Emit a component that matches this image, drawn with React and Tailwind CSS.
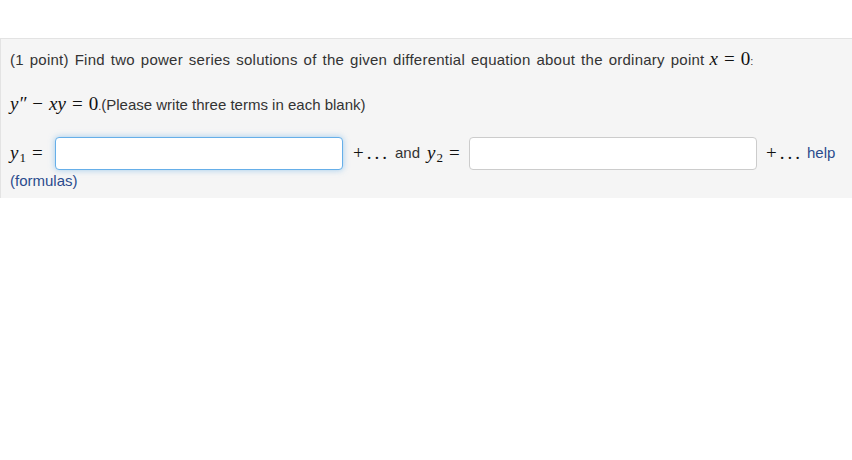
const M = ({ children, className = "" }) => (
  <span
    className={`inline-flex items-baseline font-['Liberation_Serif','DejaVu_Serif',serif] text-[19px] text-[#111] ${className}`}
  >
    {children}
  </span>
);

const V = ({ children }) => <span className="italic">{children}</span>;
const Op = ({ children }) => <span className="mx-[6px]">{children}</span>;
const Sub = ({ children }) => (
  <span className="relative top-[3px] ml-[1px] text-[13px]">{children}</span>
);
const Dots = () => (
  <span className="inline-flex items-baseline">
    <span>+</span>
    <span className="ml-[3px] tracking-[3px]">...</span>
  </span>
);

const App = () => {
  return (
    <div className="min-h-[460px] w-[852px] bg-white pt-[38px] font-['Liberation_Sans',Arial,sans-serif] text-[15px] text-[#333]">
      <div className="h-[160px] border-l border-t border-[#e3e3e3] bg-[#f5f5f5] pl-[9px]">
        <div className="mt-[6px] flex h-[20px] items-baseline">
          <span className="tracking-[0.25px] [word-spacing:1.5px]">
            (1 point) Find two power series solutions of the given differential
            equation about the ordinary point
          </span>
          <M className="ml-[5px]">
            <V>x</V>
            <Op>=</Op>0
          </M>
          <span className="text-[11px]">:</span>
        </div>

        <div className="mt-[25px] flex h-[20px] items-baseline">
          <M>
            <V>y″</V>
            <Op>−</Op>
            <V>xy</V>
            <Op>=</Op>0
          </M>
          <span className="text-[11px]">.</span>
          <span>(Please write three terms in each blank)</span>
        </div>

        <div className="mt-[27px] flex h-[33px] items-center">
          <M className="w-[45px]">
            <V>y</V>
            <Sub>1</Sub>
            <Op>=</Op>
          </M>
          <input
            type="text"
            className="h-[33px] w-[288px] rounded-[4px] border border-[#66afe9] bg-white shadow-[0_0_6px_rgba(102,175,233,0.6)] outline-none"
          />
          <M className="ml-[10px]">
            <Dots />
          </M>
          <span className="ml-[5px]">and</span>
          <M className="ml-[7px] w-[42px]">
            <V>y</V>
            <Sub>2</Sub>
            <Op>=</Op>
          </M>
          <input
            type="text"
            className="h-[33px] w-[288px] rounded-[4px] border border-[#ccc] bg-white outline-none"
          />
          <M className="ml-[9px]">
            <Dots />
          </M>
          <a href="#" className="ml-[4px] text-[#2a4b8d]">
            help
          </a>
        </div>

        <div className="mt-[2px] flex h-[18px] items-center">
          <a href="#" className="text-[#2a4b8d]">
            (formulas)
          </a>
        </div>
      </div>
    </div>
  );
};

export default App;
